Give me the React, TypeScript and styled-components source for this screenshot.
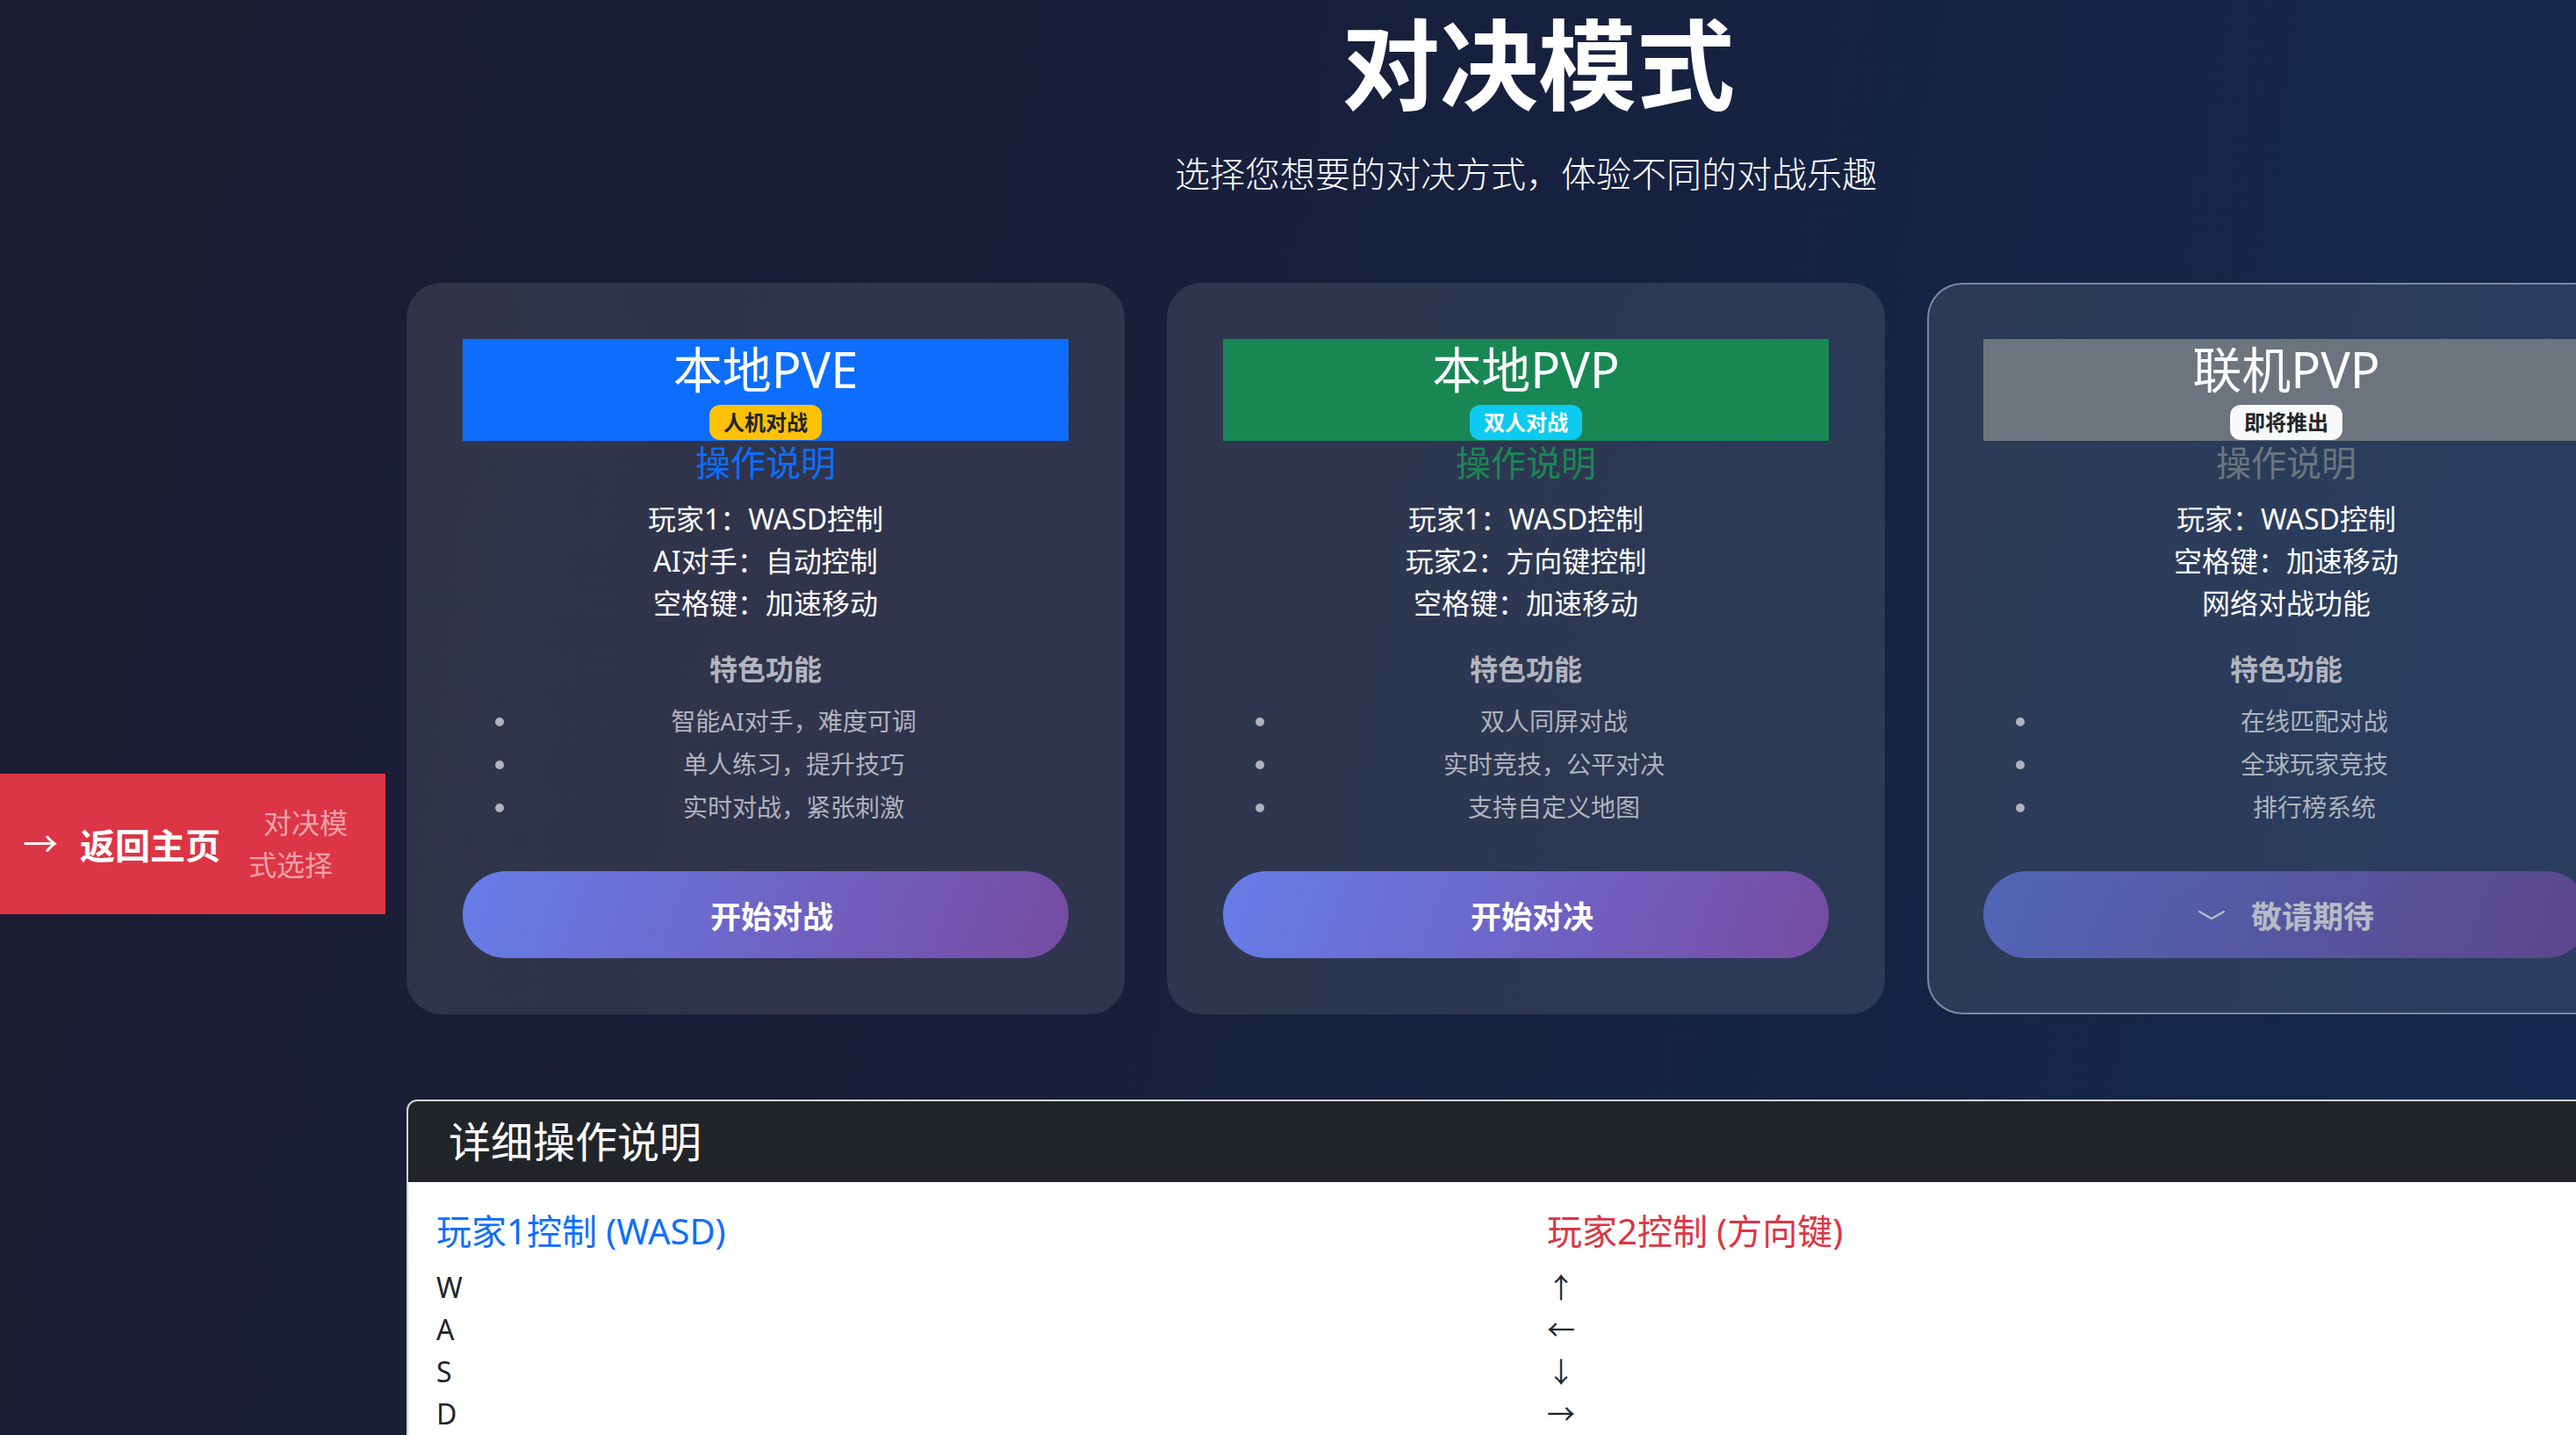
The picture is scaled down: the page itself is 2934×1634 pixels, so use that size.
import React from 'react'
import styled, { createGlobalStyle } from 'styled-components'

const GlobalStyle = createGlobalStyle`
  html, body {
    margin: 0;
    padding: 0;
    overflow: hidden;
  }
  body {
    font-family: "Noto Sans", "Noto Sans CJK SC", sans-serif;
    color: #fff;
  }
  * { box-sizing: border-box; }
`

interface TypesMode {
  title: string
  headerColor: string
  badge: string
  badgeBg: string
  badgeColor: string
  guideColor: string
  controls: string[]
  features: string[]
  button: string
  disabled?: boolean
}

const modes: TypesMode[] = [
  {
    title: '本地PVE',
    headerColor: '#0d6efd',
    badge: '人机对战',
    badgeBg: '#ffc107',
    badgeColor: '#212529',
    guideColor: '#0d6efd',
    controls: ['玩家1：WASD控制', 'AI对手：自动控制', '空格键：加速移动'],
    features: ['智能AI对手，难度可调', '单人练习，提升技巧', '实时对战，紧张刺激'],
    button: '开始对战',
  },
  {
    title: '本地PVP',
    headerColor: '#198754',
    badge: '双人对战',
    badgeBg: '#0dcaf0',
    badgeColor: '#fff',
    guideColor: '#198754',
    controls: ['玩家1：WASD控制', '玩家2：方向键控制', '空格键：加速移动'],
    features: ['双人同屏对战', '实时竞技，公平对决', '支持自定义地图'],
    button: '开始对决',
  },
  {
    title: '联机PVP',
    headerColor: '#6c757d',
    badge: '即将推出',
    badgeBg: '#f8f9fa',
    badgeColor: '#212529',
    guideColor: '#6c757d',
    controls: ['玩家：WASD控制', '空格键：加速移动', '网络对战功能'],
    features: ['在线匹配对战', '全球玩家竞技', '排行榜系统'],
    button: '敬请期待',
    disabled: true,
  },
]

const Page = styled.div`
  position: relative;
  width: 100%;
  height: 100vh;
  overflow: hidden;
  background: linear-gradient(100deg, #1b1c31 0%, #181f3b 45%, #12294f 100%);
`

const Container = styled.div`
  width: 2550px;
  margin-left: 463px;
  padding-top: 7px;
`

const Title = styled.h1`
  margin: 0;
  padding-left: 28px;
  font-size: 112px;
  font-weight: 700;
  line-height: 1.2;
  text-align: center;
  color: #fff;
`

const Lead = styled.p`
  margin: 27px 0 94px;
  font-size: 40px;
  font-weight: 300;
  line-height: 60px;
  text-align: center;
  color: #fff;
`

const CardsRow = styled.div`
  display: grid;
  grid-template-columns: repeat(3, 1fr);
  column-gap: 48px;
`

const ModeCard = styled.div<{ $disabled?: boolean }>`
  border-radius: 40px;
  padding: 62px;
  border: 2px solid ${p => (p.$disabled ? 'rgba(205, 215, 230, 0.5)' : 'transparent')};
  background: rgba(255, 255, 255, 0.1);
  text-align: center;
`

const HeaderBand = styled.div<{ $bg: string }>`
  background: ${p => p.$bg};
  color: #fff;
  padding-top: 1px;
`

const ModeTitle = styled.h3`
  margin: 0;
  font-size: 56px;
  font-weight: 400;
  line-height: 67px;
`

const BadgeLine = styled.div`
  font-size: 32px;
  line-height: 48px;
`

const Badge = styled.span<{ $bg: string; $color: string }>`
  display: inline-block;
  padding: 8px 15.6px;
  font-size: 24px;
  font-weight: 700;
  line-height: 1;
  border-radius: 12px;
  background: ${p => p.$bg};
  color: ${p => p.$color};
`

const Guide = styled.h5<{ $color: string }>`
  margin: 0 0 16px;
  font-size: 40px;
  font-weight: 400;
  line-height: 49px;
  color: ${p => p.$color};
`

const Controls = styled.div`
  margin-bottom: 32px;
  font-size: 32px;
  line-height: 48px;
  color: #fff;
`

const FeatureTitle = styled.h6`
  margin: 0 0 16px;
  font-size: 32px;
  font-weight: 700;
  line-height: 38px;
  color: #b3b5bf;
`

const FeatureList = styled.ul`
  margin: 0 0 48px;
  padding-left: 64px;
  list-style: disc;
  font-size: 28px;
  line-height: 49px;
  color: #b0b3bd;
`

const StartButton = styled.button<{ $disabled?: boolean }>`
  display: flex;
  align-items: center;
  justify-content: center;
  gap: 30px;
  width: 100%;
  height: 99px;
  padding: 0 0 0 ${p => (p.$disabled ? 0 : 14)}px;
  border: none;
  border-radius: 50px;
  background: linear-gradient(110deg, #667eea 0%, #764ba2 100%);
  color: #fff;
  font-family: inherit;
  font-size: 35px;
  font-weight: 700;
  opacity: ${p => (p.$disabled ? 0.65 : 1)};
`

const DetailCard = styled.div`
  margin-top: 97px;
  border: 2px solid #d3d5d8;
  border-radius: 12px;
  background: #fff;
  overflow: hidden;
`

const DetailHeader = styled.div`
  background: #212529;
  padding: 17px 46px 18px;
`

const DetailTitle = styled.h4`
  margin: 0;
  font-size: 48px;
  font-weight: 400;
  line-height: 57px;
  color: #fff;
`

const DetailBody = styled.div`
  display: grid;
  grid-template-columns: 1fr 1fr;
  column-gap: 48px;
  padding: 32px 32px;
`

const PlayerTitle = styled.h5<{ $color: string }>`
  margin: 0 0 16px;
  font-size: 40px;
  font-weight: 400;
  line-height: 48px;
  color: ${p => p.$color};
`

const KeyLine = styled.div`
  font-size: 32px;
  line-height: 48px;
  color: #212529;
`

const BackButton = styled.a`
  position: absolute;
  left: 0;
  top: 881px;
  display: flex;
  align-items: center;
  width: 439px;
  height: 160px;
  padding-left: 26px;
  background: #dc3545;
  color: #fff;
  text-decoration: none;
`

const BackArrow = styled.span`
  font-size: 40px;
  line-height: 1;
  margin-right: 25px;
`

const BackLabel = styled.span`
  font-size: 40px;
  font-weight: 700;
  margin-right: 32px;
`

const BackHint = styled.span`
  display: block;
  width: 120px;
  font-size: 32px;
  line-height: 48px;
  text-indent: 17px;
  color: rgba(255, 255, 255, 0.55);
`

const Chevron = () => (
  <svg width="30" height="10" viewBox="0 0 30 10" fill="none">
    <polyline points="1,1 15,9 29,1" stroke="currentColor" strokeWidth="2.4" strokeLinecap="round" strokeLinejoin="round" />
  </svg>
)

const ModeItem = ({ mode }: { mode: TypesMode }) => {
  return (
    <ModeCard $disabled={mode.disabled}>
      <HeaderBand $bg={mode.headerColor}>
        <ModeTitle>{mode.title}</ModeTitle>
        <BadgeLine>
          <Badge $bg={mode.badgeBg} $color={mode.badgeColor}>{mode.badge}</Badge>
        </BadgeLine>
      </HeaderBand>
      <Guide $color={mode.guideColor}>操作说明</Guide>
      <Controls>
        {mode.controls.map(line => (
          <div key={line}>{line}</div>
        ))}
      </Controls>
      <FeatureTitle>特色功能</FeatureTitle>
      <FeatureList>
        {mode.features.map(item => (
          <li key={item}>{item}</li>
        ))}
      </FeatureList>
      <StartButton $disabled={mode.disabled} disabled={mode.disabled}>
        {mode.disabled && <Chevron />}
        {mode.button}
      </StartButton>
    </ModeCard>
  )
}

const App = () => {
  return (
    <>
      <GlobalStyle />
      <Page>
        <Container>
          <Title>对决模式</Title>
          <Lead>选择您想要的对决方式，体验不同的对战乐趣</Lead>
          <CardsRow>
            {modes.map(mode => (
              <ModeItem key={mode.title} mode={mode} />
            ))}
          </CardsRow>
          <DetailCard>
            <DetailHeader>
              <DetailTitle>详细操作说明</DetailTitle>
            </DetailHeader>
            <DetailBody>
              <div>
                <PlayerTitle $color="#0d6efd">玩家1控制 (WASD)</PlayerTitle>
                {['W', 'A', 'S', 'D'].map(k => (
                  <KeyLine key={k}>{k}</KeyLine>
                ))}
              </div>
              <div>
                <PlayerTitle $color="#dc3545">玩家2控制 (方向键)</PlayerTitle>
                {['↑', '←', '↓', '→'].map(k => (
                  <KeyLine key={k}>{k}</KeyLine>
                ))}
              </div>
            </DetailBody>
          </DetailCard>
        </Container>
        <BackButton>
          <BackArrow>→</BackArrow>
          <BackLabel>返回主页</BackLabel>
          <BackHint>对决模式选择</BackHint>
        </BackButton>
      </Page>
    </>
  )
}

export default App
